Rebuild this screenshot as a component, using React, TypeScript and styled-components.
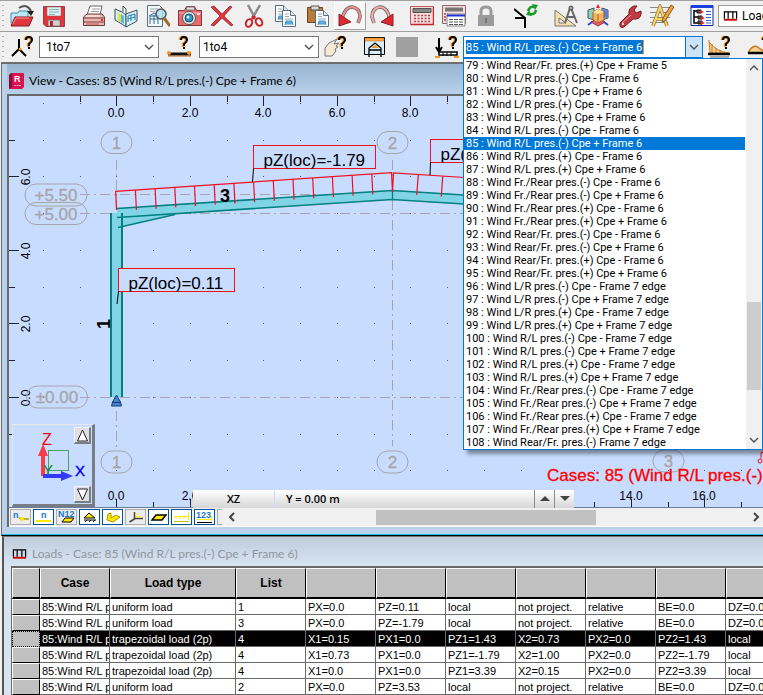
import React from "react";
import styled, { createGlobalStyle, css } from "styled-components";

const sans = '"Liberation Sans", Arial, sans-serif';
const compact = 'Roboto, "Liberation Sans", sans-serif';
const ui = 'Lato, "Open Sans", sans-serif';
const TEAL = "#008080";
const MEMBER = "#80d4e6";
const GRID = "#a6a6a6";

const GlobalStyle = createGlobalStyle`
  * { box-sizing: border-box; }
  body { margin: 0; background: #f0f0f0; overflow: hidden; }
  button, select { font: inherit; color: inherit; margin: 0; }
`;

const Page = styled.div`
  display: flex;
  flex-direction: column;
  height: 100vh;
  overflow: hidden;
  font: 11px/13px ${sans};
  color: #000;
`;

/* ---------- toolbars ---------- */

const Toolbar = styled.div`
  display: flex;
  align-items: center;
  flex: none;
  height: 31px;
  background: #f0f0f0;
  border-top: 1px solid #a0a0a0;
`;

const Grip = styled.span`
  flex: none;
  width: 6px;
  height: 26px;
  background: radial-gradient(circle, #b4b4b4 1px, transparent 1px) 0 0 / 6px 5px;
`;

const Group = styled.div<{ $last?: boolean }>`
  display: flex;
  flex: none;
  margin-right: ${(p) => (p.$last ? 0 : 8)}px;
`;

const ToolButton = styled.button<{ $pressed?: boolean; $width?: number }>`
  display: flex;
  align-items: center;
  justify-content: center;
  flex: none;
  width: ${(p) => p.$width ?? 32}px;
  height: 28px;
  padding: 0;
  border: 1px solid transparent;
  background: none;
  ${(p) =>
    p.$pressed &&
    css`
      background: #f6f6f6;
      border-color: #fff #a0a0a0 #a0a0a0 #fff;
    `}
`;

const Glyph = styled.svg.attrs({ width: 24, height: 24, viewBox: "0 0 24 24" })`
  display: block;
  flex: none;
`;

const ComboBox = styled.label<{ $inset?: number }>`
  position: relative;
  display: flex;
  align-items: center;
  justify-content: space-between;
  flex: none;
  width: 120px;
  height: 22px;
  padding: 0 4px 0 ${(p) => p.$inset ?? 3}px;
  border: 1px solid #7a7a7a;
  background: #fff;
  font: 12px/20px ${compact};
`;

const PlainSelect = styled.select`
  appearance: none;
  flex: 1;
  min-width: 0;
  padding: 0;
  border: 0;
  outline: 0;
  background: none;
`;

const Chevron = ({ up = false }: { up?: boolean }) => (
  <svg width="10" height="10" viewBox="0 0 10 10" fill="none" stroke="#505050" strokeWidth="1.4">
    <path d={up ? "M1 7 5 3l4 4" : "M1 3l4 4 4-4"} />
  </svg>
);

const LoadSelect = styled(ComboBox)`
  padding-left: 4px;
  gap: 4px;
  border-color: #a0a0a0;
`;

const CaseCombo = styled.div`
  position: relative;
  display: flex;
  flex: none;
  align-items: center;
  justify-content: space-between;
  width: 240px;
  height: 22px;
  padding-left: 2px;
  border: 1px solid #0078d7;
  background: #fff;
  font-family: ${compact};
`;

const CaseSelect = styled.select`
  appearance: none;
  height: 14px;
  padding: 0;
  border: 0;
  border-right: 1px solid #ff8a1f;
  border-radius: 0;
  outline: 0;
  background: #0078d7;
  color: #fff;
`;

const DropButton = styled.button`
  display: grid;
  place-items: center;
  align-self: stretch;
  width: 17px;
  padding: 0;
  border: 0;
  border-left: 1px solid #0078d7;
  background: #cce4f7;
`;

const CasePopup = styled.div`
  position: absolute;
  z-index: 5;
  top: 21px;
  left: -1px;
  display: flex;
  width: 300px;
  border: 1px solid #0078d7;
  background: #fff;
  box-shadow: 4px 4px 4px rgba(0, 0, 0, 0.4);
`;

const CaseList = styled.ul`
  flex: 1;
  margin: 0;
  padding: 0;
  list-style: none;
`;

const CaseItem = styled.li<{ $selected: boolean }>`
  height: 13px;
  padding-left: 2px;
  white-space: pre;
  color: ${(p) => (p.$selected ? "#fff" : "#000")};
  background: ${(p) => (p.$selected ? "#0078d7" : "#fff")};
`;

const VScroll = styled.div`
  display: flex;
  flex-direction: column;
  align-items: center;
  width: 16px;
  margin-left: 1px;
  padding: 4px 0;
  background: #f0f0f0;
`;

const VThumb = styled.span`
  width: 14px;
  height: 88px;
  margin: auto 0 45px;
  background: #cdcdcd;
`;

/* ---------- child windows ---------- */

const ViewWindow = styled.section`
  flex: none;
  padding: 0 0 8px 5px;
  margin-left: 1px;
  border-top: 2px solid #6e6e6e;
  border-left: 1px solid #6e6e6e;
  border-bottom: 1px solid #000;
  background: #b9d1ea;
  box-shadow: inset 0 -1px #22c4d6;
`;

const TitleBar = styled.header<{ $active?: boolean }>`
  display: flex;
  align-items: center;
  gap: 5px;
  height: ${(p) => (p.$active ? 30 : 29)}px;
  padding: 4px 0 0 2px;
  font: 12px/16px ${ui};
  white-space: nowrap;
  color: ${(p) => (p.$active ? "#000" : "#8f969e")};
  background: ${(p) =>
    p.$active ? "linear-gradient(#99b4d1, #b9d1ea)" : "linear-gradient(#bfcddb, #d7e4f2)"};
`;

const Client = styled.div`
  border-top: 2px solid #696969;
  border-left: 2px solid #696969;
  background: #c8dcff;
`;

const Canvas = styled.div`
  position: relative;
  height: 412px;
`;

const Drawing = styled.svg`
  display: block;
  width: 100%;
  height: 100%;
  font-family: ${sans};
`;

const AxisPanel = styled.div`
  position: absolute;
  left: 3px;
  bottom: 1px;
  width: 83px;
  height: 83px;
  border: 1px solid #e8e8e8;
  border-right: 3px solid #787c84;
  border-bottom: 3px solid #787c84;
  background: #c8dcff;
`;

const AxisButtons = styled.div`
  position: absolute;
  top: 2px;
  right: 1px;
  bottom: 1px;
  display: flex;
  flex-direction: column;
  justify-content: space-between;
`;

const AxisButton = styled.button`
  display: grid;
  place-items: center;
  width: 17px;
  height: 17px;
  padding: 0;
  border: 1px solid #f4f4f4;
  border-right: 2px solid #787c84;
  border-bottom: 2px solid #787c84;
  background: #dfe0e4;
`;

const PlaneBar = styled.div`
  position: absolute;
  left: 184px;
  bottom: 0;
  display: flex;
  width: 381px;
  height: 18px;
  font: 600 11px/18px "Open Sans", sans-serif;
  background: linear-gradient(#fff, #d6d6d6);
`;

const PlaneName = styled.span`
  width: 82px;
  text-align: center;
  border-right: 1px solid #c8dcff;
`;

const PlanePosition = styled.span`
  flex: 1;
  padding-left: 11px;
`;

const PlaneStep = styled.button`
  display: grid;
  place-items: center;
  width: 20px;
  padding: 0;
  border: 0;
  border-left: 1px solid #8a8a8a;
  background: none;
`;

const BottomStrip = styled.div`
  display: flex;
  align-items: center;
  height: 19px;
  background: #f0f0f0;
  border-bottom: 1px solid #fff;
`;

const Toggles = styled.div`
  display: flex;
  gap: 2px;
  flex: none;
  width: 213px;
  padding-left: 1px;
  overflow: hidden;
`;

const Toggle = styled.button<{ $on?: boolean }>`
  flex: none;
  width: 21px;
  height: 16px;
  padding: 0;
  border: 1px solid ${(p) => (p.$on ? "#005499" : "#adadad")};
  background: ${(p) => (p.$on ? "#fff" : "#ececec")};
  svg {
    display: block;
  }
`;

const HScroll = styled.div`
  display: flex;
  align-items: center;
  flex: 1;
  height: 16px;
  padding: 0 2px 0 5px;
  background: #f0f0f0;
`;

const HThumb = styled.span`
  width: 220px;
  height: 15px;
  margin: 0 auto 0 139px;
  background: #c1c1c1;
`;

const Arrow = ({ d }: { d: string }) => (
  <svg width="10" height="10" viewBox="0 0 10 10" fill="none" stroke="#444" strokeWidth="2">
    <path d={d} />
  </svg>
);

const LoadsWindow = styled.section`
  flex: 1;
  min-height: 0;
  margin-left: 2px;
  padding-left: 8px;
  border-left: 2px solid #555;
  border-top: 1px solid #777;
  background: #d7e4f2;
  overflow: hidden;
`;

const LoadsTitle = styled(TitleBar)`
  margin-left: -8px;
  padding-left: 8px;
`;

const TableFrame = styled.div`
  border-top: 2px solid #696969;
  border-left: 1px solid #696969;
  margin-left: -1px;
  overflow: hidden;
`;

const Table = styled.table`
  table-layout: fixed;
  width: 784px;
  border-collapse: separate;
  border-spacing: 0;
  background: #fff;
  font: 11px/14px ${sans};
`;

const HeadCell = styled.th`
  height: 31px;
  padding: 0;
  font-size: 12px;
  background: #c0c0c0;
  border: 1px solid #000;
  border-top-color: #fff;
  border-left-color: #fff;
  border-bottom-width: 2px;
`;

const RowHead = styled.th<{ $current: boolean }>`
  height: 16px;
  padding: 0;
  background: #c0c0c0;
  border: 1px solid #000;
  border-top-color: #fff;
  border-left-color: #fff;
  ${(p) => p.$current && "border: 1px dotted #000;"}
`;

const Row = styled.tr<{ $current: boolean }>`
  color: ${(p) => (p.$current ? "#fff" : "#000")};
  background: ${(p) => (p.$current ? "#000" : "#fff")};
`;

const Cell = styled.td`
  height: 16px;
  padding: 0 0 0 2px;
  border-right: 1px solid #696969;
  border-bottom: 1px solid #696969;
  overflow: hidden;
  white-space: nowrap;
`;

/* ---------- data ---------- */

const variants = ["pres.(-) Cpe -", "pres.(-) Cpe +", "pres.(+) Cpe -", "pres.(+) Cpe +"];
const directions = ["L/R", "R/L", "Fr./Rear", "Rear/Fr."];

const cases: { id: number; text: string }[] = [
  { id: 79, text: "Wind Rear/Fr. pres.(+) Cpe + Frame 5" },
  ...Array.from({ length: 28 }, (_, i) => ({
    id: 80 + i,
    text: `Wind ${directions[Math.floor(i / 4) % 4]} ${variants[i % 4]} Frame ${i < 16 ? "6" : "7 edge"}`,
  })),
  { id: 108, text: "Wind Rear/Fr. pres.(-) Frame 7 edge" },
];

const loads = [
  ["uniform load", "1", "PX=0.0", "PZ=0.11", "local", "not project.", "relative", "BE=0.0", "DZ=0.0"],
  ["uniform load", "3", "PX=0.0", "PZ=-1.79", "local", "not project.", "relative", "BE=0.0", "DZ=0.0"],
  ["trapezoidal load (2p)", "4", "X1=0.15", "PX1=0.0", "PZ1=1.43", "X2=0.73", "PX2=0.0", "PZ2=1.43", "local"],
  ["trapezoidal load (2p)", "4", "X1=0.73", "PX1=0.0", "PZ1=-1.79", "X2=1.00", "PX2=0.0", "PZ2=-1.79", "local"],
  ["trapezoidal load (2p)", "4", "X1=0.0", "PX1=0.0", "PZ1=3.39", "X2=0.15", "PX2=0.0", "PZ2=3.39", "local"],
  ["uniform load", "2", "PX=0.0", "PZ=3.53", "local", "not project.", "relative", "BE=0.0", "DZ=0.0"],
];
const columns = [28, 70, 126, 70, 70, 70, 70, 70, 70, 70, 70];

/* ---------- icons ---------- */

const Sheet = ({ x, y }: { x: number; y: number }) => (
  <g transform={`translate(${x} ${y})`}>
    <path d="M.5.5h8l5 5v11h-13z" fill="#fff" stroke="#5d6f7c" />
    <path d="M8.500.5v5h5" fill="#dfe8ee" stroke="#5d6f7c" />
    <path d="M3 4h4M3 6.500h4M3 9h8" stroke="#9aa7b0" />
    <path d="M3 15l1-4h6l1 4M5 11v4M7 11v4M9 11v4M3 13h8" fill="none" stroke="#2b8bd0" />
  </g>
);

const icons: Record<string, React.ReactNode> = {
  open: (
    <>
      <path d="M1 9h7l1-2h9v12H1z" fill="#bdeaf6" stroke="#3a8fb0" />
      <path d="M1 22 5 13h18l-4 9z" fill="#e0373e" stroke="#8b1a20" />
      <path d="M3 20l3-6h13" stroke="#f79a9a" fill="none" />
      <path d="M9 4q8-5 12 3" fill="none" stroke="#555" strokeWidth="2" />
      <path d="M17 7h7l-3 5z" fill="#222" />
    </>
  ),
  save: (
    <>
      <path d="M1.500 2.500h21v20H4l-2.500-2.500z" fill="#e3343c" stroke="#8e4248" />
      <path d="M5 3h14v9H5z" fill="#d9f2f5" stroke="#a55" strokeWidth=".5" />
      <path d="M7 5.500h10M7 8h10M7 10.500h6" stroke="#8fb6bd" />
      <path d="M6 16h12v6H6z" fill="#cfcfcf" stroke="#666" strokeWidth=".6" />
      <path d="M8 17h3v5H8z" fill="#c2222b" />
    </>
  ),
  print: (
    <>
      <path d="M8 2h12l-2 9H5z" fill="#fff" stroke="#666" />
      <path d="M10 5h8M9 7.500h8" stroke="#999" />
      <path d="M1.500 13 5 10h15l2.500 3v8.500h-21z" fill="#ecb5b3" stroke="#6d4142" />
      <path d="M2 14h20M2 18h20" stroke="#7d3d40" />
      <path d="M4 12h14" stroke="#fff" />
      <path d="M4 20h13" stroke="#c2595c" />
      <path d="M19 16h2" stroke="#e22" strokeWidth="2" />
    </>
  ),
  book: (
    <>
      <path d="M1 5l7 3 4 3v12l-4-3-7-4z" fill="#d5f0ee" stroke="#3f525c" />
      <path d="M4 9l3 1v8l-3-1z" fill="#e4e23e" />
      <path d="M7 10l3 2v8l-3-2z" fill="#58b9dd" />
      <path d="M12 10l11-4v11l-11 6z" fill="#d7eef8" stroke="#3f525c" />
      <path d="M14 18v-6l7-2v6M14 15l7-2M17 11v6" fill="none" stroke="#1c7fb8" />
      <path d="M9 8V2l3 3v5" fill="#fff" stroke="#3f525c" />
    </>
  ),
  preview: (
    <>
      <path d="M1.500 1.500h12l3 3v18h-15z" fill="#f4fafc" stroke="#5d6f7c" />
      <path d="M4 5h8M4 7.500h5" stroke="#9aa7b0" />
      <path d="M4 20v-8h8v8M4 15h8M8 11v9M3 12l5-3 5 3" fill="none" stroke="#2a6d9b" />
      <circle cx="15" cy="10" r="5" fill="#a9dff2" fillOpacity=".8" stroke="#555" strokeWidth="1.500" />
      <path d="M18 14l6 8" stroke="#a5672a" strokeWidth="3" />
    </>
  ),
  camera: (
    <>
      <path d="M.5 6.500h6l2-4h8l2 4h5v15H.5z" fill="#e86a6e" stroke="#84383b" />
      <path d="M9 3h7l1 3H8z" fill="#e8e8e8" stroke="#777" />
      <path d="M1 9h22" stroke="#f7b4b4" />
      <circle cx="11" cy="14" r="6.500" fill="#e8e8e8" stroke="#555" />
      <circle cx="11" cy="14" r="4" fill="#2b9ac9" stroke="#245" />
      <circle cx="10" cy="13" r="1.500" fill="#d5f4ff" />
      <path d="M19 9h3v2h-3z" fill="#ffe0e0" />
    </>
  ),
  remove: (
    <path d="M1 3l3-1 8 8 8-8 2 1-8 9 9 9-2 1-9-8-8 8-3-1 9-9z" fill="#e5343a" stroke="#8e3438" strokeWidth=".8" />
  ),
  cut: (
    <>
      <path d="M6 1l7 13M18 1l-8 14" stroke="#8b8b8b" strokeWidth="2.500" />
      <path d="M10 12l3 3M13 12l-3 3" stroke="#c8222a" strokeWidth="2" />
      <ellipse cx="7" cy="19" rx="3" ry="4" transform="rotate(25 7 19)" fill="none" stroke="#c8222a" strokeWidth="2" />
      <ellipse cx="17" cy="18" rx="3" ry="4" transform="rotate(-30 17 18)" fill="none" stroke="#c8222a" strokeWidth="2" />
    </>
  ),
  copy: (
    <>
      <Sheet x={1} y={1} />
      <Sheet x={8} y={6} />
    </>
  ),
  paste: (
    <>
      <path d="M1.500 3.500h15v15h-15z" fill="#bb7a36" stroke="#6b4520" />
      <path d="M5 2h8v4H5z" fill="#d8d8d8" stroke="#555" />
      <Sheet x={9} y={6} />
    </>
  ),
  undo: (
    <>
      <path d="M4 15Q7 3 14 3q8 1 8 10l-2 6" fill="none" stroke="#666" strokeWidth="3.600" />
      <path d="M4 15Q7 3 14 3q8 1 8 10l-2 6" fill="none" stroke="#f08a8e" strokeWidth="2.200" />
      <path d="M1 10v12l12-4z" fill="#df2930" stroke="#80252a" />
    </>
  ),
  redo: (
    <>
      <path d="M20 15Q17 3 10 3q-8 1-8 10l2 6" fill="none" stroke="#666" strokeWidth="3.600" />
      <path d="M20 15Q17 3 10 3q-8 1-8 10l2 6" fill="none" stroke="#f4a8aa" strokeWidth="2.200" />
      <path d="M23 10v12l-12-4z" fill="#df2930" stroke="#80252a" />
    </>
  ),
  calc: (
    <>
      <path d="M.5 2.500h23v18H.5z" fill="#f7dede" stroke="#bb5a5d" />
      <path d="M1 20.500h22.500V3" fill="none" stroke="#c2262c" strokeWidth="1.500" />
      <path d="M3 4.500h18v4H3z" fill="#888" stroke="#555" />
      <path d="M4 11.500h16M4 14.500h16M4 17.500h16" stroke="#b3484b" strokeWidth="1.500" strokeDasharray="2 1.500" />
    </>
  ),
  calcTable: (
    <>
      <path d="M.5 1.500h23v18H.5z" fill="#f7dede" stroke="#8d6667" />
      <path d="M3 3.500h18v4H3z" fill="#777" />
      <path d="M2 10h4M2 13h4M2 16h4" stroke="#b3484b" strokeWidth="1.500" strokeDasharray="2 1" />
      <path d="M5 10h18v12H5z" fill="#fff" stroke="#888" />
      <path d="M5 10.500h18v2H5z" fill="#2233d5" />
      <path d="M7 15.500h14M7 18h14M7 20.500h14" stroke="#555" strokeDasharray="4 1" />
    </>
  ),
  lock: (
    <>
      <path d="M7 12V7q0-4 5-4t5 4v5" fill="none" stroke="#9b9b9b" strokeWidth="3" />
      <path d="M4 11h16v11H4z" fill="#9b9b9b" />
      <path d="M12 14v5" stroke="#777" strokeWidth="2" />
    </>
  ),
  node: (
    <>
      <path d="M0 5l11 9v10M12 14H1" stroke="#000" strokeWidth="2" fill="none" />
      <path d="M14 7q2-5 6-4M22 6q-1 5-6 4" stroke="#159c2b" strokeWidth="2.500" fill="none" />
      <path d="M18 0l6 1-3 5zM18 12l-6-1 3-5z" fill="#159c2b" />
    </>
  ),
  draft: (
    <>
      <path d="M1 6v16h21z" fill="#f6dfae" stroke="#777" />
      <path d="M5 14v5h7z" fill="#f0f0f0" stroke="#777" />
      <path d="M16 4l-5 15M17 4l6 15M13 13h8" stroke="#666" strokeWidth="2" />
      <circle cx="17" cy="4" r="2" fill="#aaa" stroke="#444" />
    </>
  ),
  cube: (
    <>
      <path d="M2 6l6-2v12l-6-2zM22 6l-6-2v12l6-2z" fill="#8ed0b5" stroke="#456" />
      <path d="M17 5l5 2v7l-5-1z" fill="#5f7ed0" />
      <path d="M5 18l7-3 7 3-7 4z" fill="#ee5a6c" stroke="#934" />
      <path d="M7 8l5-3 6 3v8l-6 3-5-3z" fill="#f7b25b" stroke="#a5622a" />
      <path d="M7 8l5 2 6-2-6-3z" fill="#ffe2a8" />
      <path d="M12 10v9" stroke="#a5622a" />
      <path d="M12 0l2 4h-4z" fill="#e22" />
      <path d="M2 21l4-3M22 21l-4-3" stroke="#3547c5" strokeWidth="2" />
    </>
  ),
  wrench: (
    <>
      <path d="M2 19l9-9q-1-6 5-8l3 0-3 4 2 3 5-2q1 7-5 8l-3 0-9 8q-5 2-4-4z" fill="#c33a41" stroke="#6b2226" />
      <path d="M4 19l9-8" stroke="#f3a0a0" />
      <circle cx="5" cy="20" r="1" fill="#fff" />
    </>
  ),
  text: (
    <>
      <path d="M0 3.500h20M0 8.500h20M0 13.500h20M0 18.500h18" stroke="#888" />
      <path d="M3 22 10 3l7 19M6 15h9" fill="none" stroke="#8a7d50" strokeWidth="3.600" />
      <path d="M3 22 10 3l7 19M6 15h9" fill="none" stroke="#ffd75a" strokeWidth="2" />
      <path d="M21 1l3 2-9 14-3 1 1-4z" fill="#f3a23a" stroke="#8a5a20" />
    </>
  ),
  tree: (
    <>
      <path d="M1 1.500h22v20H1z" fill="#fff" stroke="#0b2a9a" />
      <path d="M1 1h22v3H1z" fill="#1c3fe0" />
      <path d="M4 6v13h4M4 7h5M4 13h5" stroke="#000" strokeWidth="1.500" fill="none" />
      <path d="M7 6h4v3H7zM8 12h4v3H8zM8 17h4v3H8z" fill="#555" stroke="#111" />
      <path d="M10 6l4 2-4 2zM11 12l4 2-4 2zM11 17l4 2-4 2z" fill="#e22" />
      <path d="M16 7.500h5M16 10.500h5M16 13.500h5M16 16.500h5M16 19h5" stroke="#3360d5" />
    </>
  ),
  nodeQuery: (
    <>
      <path d="M8 4v10L1 21M8 14l7 7" stroke="#000" strokeWidth="2" fill="none" />
      <circle cx="9" cy="14" r="1.500" fill="#f7941d" />
    </>
  ),
  barQuery: (
    <>
      <path d="M1 19h23" stroke="#111" strokeWidth="3" />
      <path d="M1 21h23" stroke="#b5651d" />
      <circle cx="2" cy="18" r="2" fill="#f7941d" />
      <circle cx="22" cy="18" r="2" fill="#f7941d" />
    </>
  ),
  handQuery: (
    <path d="M2 21V13l4-5 8-4-3 5 5-1-3 3 2 1-3 2 1 2-4 5z" fill="#f7ead4" stroke="#777" />
  ),
  frame: (
    <>
      <path d="M1.500 2.500h20v17h-20z" fill="#d9f0fa" stroke="#000" />
      <path d="M2 3h19v3H2z" fill="#ffa64a" stroke="#c26a10" strokeWidth=".5" />
      <path d="M6 22v-9l6-5 6 5v9M6 15h12" fill="none" stroke="#000" strokeWidth="1.300" />
      <path d="M8 13l4-3 4 3z" fill="#f7941d" />
    </>
  ),
  square: <path d="M1 2h22v20H1z" fill="#a0a0a0" />,
  loadQuery: (
    <>
      <path d="M4 3v13M1 12l3 5 3-5" stroke="#000" strokeWidth="2" fill="none" />
      <path d="M4 17h18v3H4z" fill="#fff" stroke="#000" strokeWidth="1.500" />
      <path d="M8 17v4M12 17v4M16 17v4" stroke="#000" />
      <path d="M0 22h5M19 22h5" stroke="#f7941d" strokeWidth="2" />
    </>
  ),
  resultQuery: (
    <>
      <path d="M2 5l1 13h19Q10 17 2 7" fill="#f9cf94" stroke="#c77a1c" />
      <path d="M5 9v9M9 13v5M13 15v3" stroke="#c77a1c" fill="none" />
      <path d="M1 19h22" stroke="#000" strokeWidth="2.500" />
      <path d="M3 22h19" stroke="#aaa" strokeWidth="2" />
    </>
  ),
  curveQuery: (
    <>
      <path d="M1 18q5-10 11-5t11 3" fill="#f9cf94" stroke="#c77a1c" strokeWidth="1.500" />
      <path d="M1 18h22" stroke="#000" strokeWidth="2.500" />
    </>
  ),
};

const Query = ({ x }: { x: number }) => (
  <g fill="none">
    <path d={`M${x - 1} 5q0-3 3-3t3 3q0 2-3 4v3`} stroke="#f7941d" strokeWidth="2.500" />
    <path d={`M${x} 5q0-3 3-3t3 3q0 2-3 4v2`} stroke="#000" strokeWidth="2" />
    <path d={`M${x + 2} 13h2`} stroke="#000" strokeWidth="2" />
  </g>
);

const Tool = ({
  name,
  label,
  pressed,
  width,
  query,
}: {
  name: string;
  label: string;
  pressed?: boolean;
  width?: number;
  query?: number;
}) => (
  <ToolButton type="button" aria-label={label} $pressed={pressed} $width={width}>
    <Glyph>
      {icons[name]}
      {query !== undefined && <Query x={query} />}
    </Glyph>
  </ToolButton>
);

const groups: [string, string][][] = [
  [["open", "Open"], ["save", "Save"]],
  [
    ["print", "Print"], ["book", "Printout composition"], ["preview", "Print preview"],
    ["camera", "Screen capture"], ["remove", "Delete"], ["cut", "Cut"], ["copy", "Copy"],
    ["paste", "Paste"], ["undo", "Undo"], ["redo", "Redo"],
  ],
  [["calc", "Calculations"], ["calcTable", "Calculation report"], ["lock", "Lock"]],
  [["node", "Update structure"]],
  [["draft", "Drafting"], ["cube", "3D view"], ["wrench", "Preferences"], ["text", "Annotate"]],
  [["tree", "Object inspector"]],
];

/* ---------- structure drawing ---------- */

const px = (m: number) => Math.round(116.3 + m * 36.75);
const py = (m: number) => Math.round(396.8 - m * 36.75);
const range = (a: number, b: number) => Array.from({ length: b - a + 1 }, (_, i) => a + i);

const Bubble = ({ x, y, w, label }: { x: number; y: number; w: number; label: string }) => (
  <g>
    <rect x={x - w / 2} y={y - 11} width={w} height="22" rx="11" fill="none" stroke={GRID} />
    <text x={x} y={y + 6} fontSize="17" fill={GRID} stroke={GRID} strokeWidth=".3" textAnchor="middle">
      {label}
    </text>
  </g>
);

const LoadTag = ({ x, y, w, tail, label }: { x: number; y: number; w: number; tail: [number, number]; label: string }) => (
  <g>
    <rect x={x} y={y} width={w} height="23" fill="#c8dcff" stroke="#f01020" />
    <path d={`M${x} ${y + 23}L${tail[0]} ${tail[1]}`} stroke="#000" />
    <text x={x + 10} y={y + 20} fontSize="17">
      {label}
    </text>
  </g>
);

const Structure = () => (
  <Drawing role="img" aria-label="Frame with wind loads">
    <g transform="translate(-9 -96)">
      {range(-2, 17).map((i) =>
        [103, ...range(-3, 7).map(py)].map((y) => (
          <rect key={`${i}-${y}`} x={px(i)} y={y} width="1" height="1" fill="#4848e8" />
        ))
      )}

      <g stroke={GRID} strokeDasharray="10 4 2 4" fill="none">
        <path d="M116.500 160v53M116.500 411v36M392.500 160v286" />
        <path d="M80 194.500h240M80 213.500h400M80 397.500h400" />
      </g>

      <g stroke="#222">
        {range(-1, 17).map((i) => (
          <path key={i} d={`M${px(i) + 0.5} 96v${i % 2 ? 6 : 10}M${px(i) + 0.5} 508v${i % 2 ? -6 : -9}`} />
        ))}
        {[7, 6, 4, 3, 2, 1, 0, -1].map((i) => (
          <path key={i} d={`M9 ${py(i) + 0.5}h${i % 2 ? 6 : 10}`} />
        ))}
        <path d="M9 507.500h754" stroke="#6a7aa0" />
      </g>
      <g fontSize="12" textAnchor="middle">
        {[0, 2, 4, 6, 8].map((i) => (
          <text key={i} x={px(i)} y="117">{`${i}.0`}</text>
        ))}
        {[0, 2, 14, 16].map((i) => (
          <text key={i} x={px(i)} y="500">{`${i}.0`}</text>
        ))}
        {[6, 4, 2, 0].map((i) => (
          <text key={i} transform={`translate(30 ${py(i) + 1}) rotate(-90)`}>{`${i}.0`}</text>
        ))}
      </g>

      <Bubble x={116.5} y={142.5} w={31} label="1" />
      <Bubble x={392.5} y={142.5} w={31} label="2" />
      <Bubble x={116.5} y={462} w={31} label="1" />
      <Bubble x={392.5} y={462} w={31} label="2" />
      <Bubble x={668.5} y={461} w={31} label="3" />
      <Bubble x={56} y={195} w={62} label="+5.50" />
      <Bubble x={56} y={213.5} w={62} label="+5.00" />
      <Bubble x={57} y={397} w={61} label="±0.00" />

      <path d="M111 213h12v184h-12z" fill={MEMBER} />
      <path d="M117 208.500 392 190l88 6v9l-88-6-217 15-58 13.500z" fill={MEMBER} />
      <g stroke={TEAL} fill="none">
        <path d="M111 213v184M122 213v184" strokeWidth="2" />
        <path d="M117 208.500 392 190.500l88 5.500M117 217.500 392 199.500l88 5.500" strokeWidth="1.600" />
        <path d="M118 227.500 175 214.500M392.500 190v9" strokeWidth="1.300" />
      </g>

      <g stroke="#f01020" fill="none" strokeWidth="1.200">
        <path d="M116.500 210 115.700 191.300 391.500 172.700 392.500 192 393.500 173 480 178.500" />
        {range(1, 13).map((i) => {
          const x = 115.7 + i * 19.7;
          return <path key={i} d={`M${x} ${191.3 - i * 1.33}L${x + 1} ${211.3 - i * 1.3}`} />;
        })}
        <path d="M418.300 175 416.700 195M442.700 176.500 441.300 196.500" />
      </g>

      <LoadTag x={253.5} y={145.5} w={122} tail={[252.5, 182]} label="pZ(loc)=-1.79" />
      <LoadTag x={430.5} y={139.5} w={122} tail={[430, 175]} label="pZ(loc)=-1.79" />
      <LoadTag x={118.5} y={268.5} w={116} tail={[117, 304]} label="pZ(loc)=0.11" />

      <text x="220" y="202" fontSize="18" fontWeight="bold">
        3
      </text>
      <text transform="translate(110 329) rotate(-90)" fontSize="18" fontWeight="bold">
        1
      </text>
      <path d="M116.500 395l4 7 1 4h-10l1-4z" fill="#4b83c9" stroke="#123a80" />
      <path d="M112 402.500h9" stroke="#123a80" />

      <path d="M766 452.500h-5v6" stroke="#f01020" fill="none" />
      <circle cx="760" cy="461" r="2" stroke="#f01020" fill="none" />
      <text x="547" y="481" fontSize="17" fill="#ff0000" stroke="#ff0000" strokeWidth=".3">
        Cases: 85 (Wind R/L pres.(-)
      </text>
    </g>
  </Drawing>
);

const ToggleText = styled.text`
  font: bold 9px ${sans};
  fill: #1677d0;
`;

const toggles: { label: string; on: boolean; art: React.ReactNode }[] = [
  {
    label: "Node numbers",
    on: false,
    art: (
      <>
        <ToggleText x="2" y="8">n</ToggleText>
        <path d="M8 8l3 1h7" stroke="#aaa000" strokeWidth="1.500" />
        <circle cx="11" cy="9" r="2" fill="#ffe800" />
      </>
    ),
  },
  {
    label: "Bar numbers",
    on: true,
    art: (
      <>
        <ToggleText x="7" y="8">n</ToggleText>
        <path d="M2 11h15" stroke="#ffe800" strokeWidth="2" />
      </>
    ),
  },
  {
    label: "Panel numbers",
    on: false,
    art: (
      <>
        <path d="M5 12l3-4h9l-3 4z" fill="#ffe800" stroke="#000" />
        <ToggleText x="1" y="7">N12</ToggleText>
      </>
    ),
  },
  {
    label: "Supports",
    on: true,
    art: (
      <>
        <path d="M4 8l5-5 6 5z" fill="#ffe800" stroke="#000" />
        <path d="M4 10h12M5 12l2-2M9 12l2-2M13 12l2-2" stroke="#000" />
      </>
    ),
  },
  { label: "Sections", on: true, art: <path d="M5 4l3-1v5l5-3 4 2-7 5-6-2z" fill="#ffe800" stroke="#a89800" /> },
  {
    label: "Local systems",
    on: false,
    art: (
      <>
        <path d="M8.500 2v7l-5 3M8 8.500h9" stroke="#444" strokeWidth="1.500" />
        <path d="M10 3v4h6" stroke="#ffe800" />
      </>
    ),
  },
  { label: "Panel description", on: true, art: <path d="M3 10l4-5h10l-4 5z" fill="#ffe800" stroke="#000" strokeWidth="1.500" /> },
  {
    label: "Loads",
    on: true,
    art: (
      <>
        <path d="M2 6.500h15M4 6v3M8 6v3M12 6v3M16.500 3v7" stroke="#ffe800" />
        <path d="M2 11.500h15" stroke="#d8b800" />
      </>
    ),
  },
  {
    label: "Load values",
    on: true,
    art: (
      <>
        <path d="M2 9.500h15M16.500 6v5" stroke="#ffe800" />
        <ToggleText x="1" y="8">123</ToggleText>
        <path d="M2 12.500h15" stroke="#000" />
      </>
    ),
  },
  { label: "More", on: false, art: null },
];

const LoadGlyph = ({ size }: { size: number }) => (
  <svg width={size} height="14" viewBox="0 0 16 14" fill="none" stroke="#000">
    <path d="M1 2.500h14M1.500 2v8M5.500 2v8M10.500 2v8M14.500 2v8" strokeWidth="1.300" />
    <path d="M1 11h14" stroke="#c00" strokeWidth="2" />
  </svg>
);

export default function App() {
  return (
    <Page>
      <GlobalStyle />
      <Toolbar aria-label="Standard">
        <Grip />
        {groups.map((group, i) => (
          <Group key={i} $last={i === groups.length - 1}>
            {group.map(([name, label]) => (
              <Tool key={name} name={name} label={label} pressed={name === "undo"} />
            ))}
          </Group>
        ))}
        <LoadSelect>
          <LoadGlyph size={15} />
          <PlainSelect aria-label="Layout">
            <option>Loads</option>
          </PlainSelect>
        </LoadSelect>
      </Toolbar>

      <Toolbar aria-label="Selection">
        <Grip />
        <Tool name="nodeQuery" label="Node selection" width={33} query={15} />
        <ComboBox $inset={6}>
          <PlainSelect aria-label="Nodes">
            <option>1to7</option>
          </PlainSelect>
          <Chevron />
        </ComboBox>
        <Tool name="barQuery" label="Bar selection" width={40} query={14} />
        <ComboBox>
          <PlainSelect aria-label="Bars">
            <option>1to4</option>
          </PlainSelect>
          <Chevron />
        </ComboBox>
        <Group>
          <Tool name="handQuery" label="Select objects" query={16} />
        </Group>
        <Group>
          <Tool name="frame" label="Frame view" />
          <Tool name="square" label="Filter" />
        </Group>
        <Tool name="loadQuery" label="Case selection" query={15} />
        <CaseCombo>
          <CaseSelect aria-label="Load case">
            <option>85 : Wind R/L pres.(-) Cpe + Frame 6</option>
          </CaseSelect>
          <DropButton type="button" aria-label="Close case list">
            <Chevron />
          </DropButton>
          <CasePopup>
            <CaseList role="listbox" aria-label="Load cases">
              {cases.map((c) => (
                <CaseItem key={c.id} role="option" aria-selected={c.id === 85} $selected={c.id === 85}>
                  {`${c.id} : ${c.text}`}
                </CaseItem>
              ))}
            </CaseList>
            <VScroll>
              <Chevron up />
              <VThumb />
              <Chevron />
            </VScroll>
          </CasePopup>
        </CaseCombo>
        <Group>
          <Tool name="resultQuery" label="Mode selection" query={16} />
        </Group>
        <Tool name="curveQuery" label="Result selection" query={16} />
      </Toolbar>

      <ViewWindow>
        <TitleBar $active>
          <svg width="15" height="16" viewBox="0 0 15 16">
            <path d="M2 0h12a1 1 0 011 1v13l-2 2H1a1 1 0 01-1-1V2z" fill="#d6124f" />
            <path d="M0 2l3-2v14l-3 2z" fill="#8b0d35" />
            <text x="5" y="9" fontFamily="Liberation Sans" fontSize="9" fontWeight="bold" fill="#fff">R</text>
            <path d="M5 12.500h7" stroke="#f6a5bd" strokeDasharray="2 .6" />
          </svg>
          View - Cases: 85 (Wind R/L pres.(-) Cpe + Frame 6)
        </TitleBar>
        <Client>
          <Canvas>
            <Structure />
            <AxisPanel>
              <svg width="79" height="79" viewBox="0 0 79 79">
                <path d="M28 51V31h-3l5-12 5 12h-3v20z" fill="#f83c48" />
                <path d="M30 49h18v-3l12 5-12 5v-3H30z" fill="#3438f8" />
                <rect x="35.500" y="25.500" width="20" height="20" fill="none" stroke="#4ba064" />
                <text x="29" y="20" fontSize="16" fontFamily="Liberation Sans" fill="#f00">Z</text>
                <text x="30" y="50" fontSize="15" fontFamily="Liberation Sans" fill="#008020">Y</text>
                <text x="62" y="51" fontSize="15" fontFamily="Liberation Sans" fill="#0000f0" stroke="#0000f0" strokeWidth=".4">X</text>
              </svg>
              <AxisButtons>
                <AxisButton type="button" aria-label="Next plane">
                  <svg width="13" height="13" viewBox="0 0 13 13"><path d="M6.500 1l5 11h-10z" fill="#fff" stroke="#222" /></svg>
                </AxisButton>
                <AxisButton type="button" aria-label="Previous plane">
                  <svg width="13" height="13" viewBox="0 0 13 13"><path d="M6.500 12l5-11h-10z" fill="#fff" stroke="#222" /></svg>
                </AxisButton>
              </AxisButtons>
            </AxisPanel>
            <PlaneBar>
              <PlaneName>XZ</PlaneName>
              <PlanePosition>Y = 0.00 m</PlanePosition>
              <PlaneStep type="button" aria-label="Move plane up">
                <svg width="10" height="6"><path d="M5 0l5 5H0z" fill="#444" /></svg>
              </PlaneStep>
              <PlaneStep type="button" aria-label="Move plane down">
                <svg width="10" height="6"><path d="M5 5l5-5H0z" fill="#444" /></svg>
              </PlaneStep>
            </PlaneBar>
          </Canvas>
          <BottomStrip>
            <Toggles>
              {toggles.map((t) => (
                <Toggle key={t.label} type="button" aria-label={t.label} aria-pressed={t.on} $on={t.on}>
                  <svg width="19" height="14" viewBox="0 0 19 14" fill="none">{t.art}</svg>
                </Toggle>
              ))}
            </Toggles>
            <HScroll>
              <Arrow d="M7 1 3 5l4 4" />
              <HThumb />
              <Arrow d="M3 1l4 4-4 4" />
            </HScroll>
          </BottomStrip>
        </Client>
      </ViewWindow>

      <LoadsWindow>
        <LoadsTitle>
          <LoadGlyph size={15} />
          Loads - Case: 85 (Wind R/L pres.(-) Cpe + Frame 6)
        </LoadsTitle>
        <TableFrame>
          <Table>
            <colgroup>
              {columns.map((w, i) => (
                <col key={i} width={w} />
              ))}
            </colgroup>
            <thead>
              <tr>
                {["", "Case", "Load type", "List", "", "", "", "", "", "", ""].map((h, i) => (
                  <HeadCell key={i}>{h}</HeadCell>
                ))}
              </tr>
            </thead>
            <tbody>
              {loads.map((load, r) => (
                <Row key={r} $current={r === 2}>
                  <RowHead $current={r === 2} />
                  <Cell>85:Wind R/L p</Cell>
                  {load.map((v, c) => (
                    <Cell key={c}>{v}</Cell>
                  ))}
                </Row>
              ))}
            </tbody>
          </Table>
        </TableFrame>
      </LoadsWindow>
    </Page>
  );
}
